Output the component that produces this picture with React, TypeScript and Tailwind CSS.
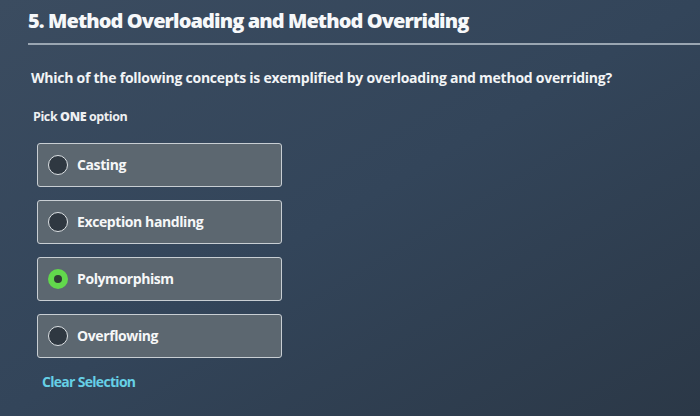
import React, { useState } from 'react';

const options = ['Casting', 'Exception handling', 'Polymorphism', 'Overflowing'];

export default function App() {
  const [selected, setSelected] = useState<number | null>(2);

  return (
    <div
      className="w-[700px] h-[416px] overflow-hidden bg-gradient-to-br from-[#3b4c60] via-[#33455a] to-[#2b3847] text-white"
      style={{ fontFamily: '"Open Sans", "Liberation Sans", sans-serif' }}
    >
      {/* header */}
      <div className="pl-[28px] pt-[7px]">
        <h1 className="text-[20px] font-extrabold tracking-[-0.9px] leading-[28px] text-[#f6f8fa]">
          5. Method Overloading and Method Overriding
        </h1>
        <div className="mt-[8px] h-[2px] bg-[#9aa6b2]" />
      </div>

      <div className="pl-[31px] pt-[22px]">
        <p className="text-[14px] font-bold tracking-[-0.25px] text-[#f2f4f6]">
          Which of the following concepts is exemplified by overloading and method overriding?
        </p>
        <p className="mt-[20px] ml-[2px] text-[12.5px] font-bold tracking-[-0.4px] text-[#eef0f2]">
          Pick <span className="font-extrabold">ONE</span> option
        </p>

        <div className="mt-[16px] flex flex-col gap-[13px] pl-[6px]">
          {options.map((o, i) => (
            <button
              key={o}
              onClick={() => setSelected(i)}
              className="flex items-center gap-[9px] w-[245px] h-[44px] px-[10px] rounded-[3px] border-[1.5px] border-[#c8ced3] bg-[#5c6770] text-left"
            >
              {selected === i ? (
                <span className="w-[20px] h-[20px] rounded-full bg-[#62d84c] flex items-center justify-center">
                  <span className="w-[8px] h-[8px] rounded-full bg-[#2f3d35]" />
                </span>
              ) : (
                <span className="w-[20px] h-[20px] rounded-full border-[1.5px] border-[#dde2e5] bg-[#2f3841]" />
              )}
              <span className="text-[14px] font-bold tracking-[-0.4px] text-[#f6f7f8]">{o}</span>
            </button>
          ))}
        </div>

        <button
          onClick={() => setSelected(null)}
          className="mt-[13px] ml-[11px] text-[14px] font-bold tracking-[-0.7px] text-[#66d0e6]"
        >
          Clear Selection
        </button>
      </div>
    </div>
  );
}
